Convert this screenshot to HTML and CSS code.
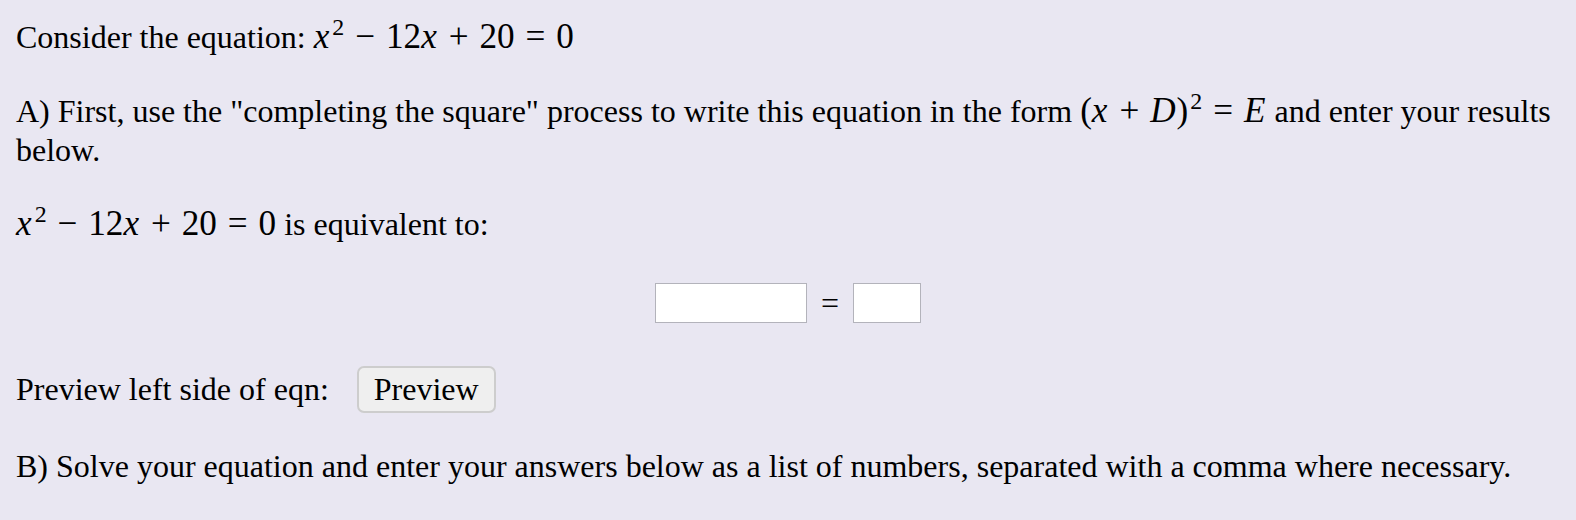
FILE: index.html
```html
<!DOCTYPE html>
<html lang="en">
<head>
  <meta charset="UTF-8" />
  <title>Completing the square</title>
  <link rel="stylesheet" href="styles.css">
</head>
<body>
  <div class="question">
    <p class="first">
      Consider the equation:
      <span class="math"><i>x</i><sup>2</sup><span class="op">−</span>12<i>x</i><span class="op">+</span>20<span class="op">=</span>0</span>
    </p>

    <p>
      A) First, use the "completing the square" process to write this equation in the form
      <span class="math">(<i>x</i><span class="op">+</span><i>D</i>)<sup>2</sup><span class="op">=</span><i>E</i></span>
      and enter your results below.
    </p>

    <p>
      <span class="math"><i>x</i><sup>2</sup><span class="op">−</span>12<i>x</i><span class="op">+</span>20<span class="op">=</span>0</span>
      is equivalent to:
    </p>

    <div class="answer-row">
      <input type="text" class="answer wide">
      <span class="math eq">=</span>
      <input type="text" class="answer narrow">
    </div>

    <div class="preview-row">
      <span>Preview left side of eqn:</span>
      <button type="button" class="preview-btn">Preview</button>
    </div>

    <p>
      B) Solve your equation and enter your answers below as a list of numbers, separated with a comma where necessary.
    </p>
  </div>
</body>
</html>
```

FILE: styles.css
```css
body {
  margin: 0;
  padding: 17px 16px;
  background: #e9e7f2;
  color: #000;
  font-family: "Liberation Serif", "Times New Roman", serif;
  font-size: 32px;
  line-height: 39px;
}

p {
  margin: 34px 0 0;
}

p.first {
  margin-top: 0;
}

.math {
  font-size: 1.1em;
  white-space: nowrap;
}

.math i {
  font-style: italic;
  padding-right: 1px;
}

.math sup {
  font-size: 0.68em;
  line-height: 0;
  vertical-align: 0.55em;
  margin-left: 2px;
}

.op {
  margin: 0 0.31em;
}

.answer-row {
  display: flex;
  justify-content: center;
  align-items: center;
  gap: 14px;
  margin-top: 39px;
}

.answer {
  box-sizing: border-box;
  height: 40px;
  margin: 0;
  padding: 0 6px;
  background: #fff;
  border: 1px solid #b3b3bb;
  border-radius: 0;
  font: inherit;
}

.wide {
  width: 152px;
}

.narrow {
  width: 68px;
}

.eq {
  font-size: 32px;
}

.preview-row {
  display: flex;
  align-items: center;
  gap: 28px;
  margin-top: 43px;
}

.preview-btn {
  box-sizing: border-box;
  height: 47px;
  padding: 0 15px;
  background: #efefef;
  border: 2px solid #cdcdcd;
  border-radius: 7px;
  color: #000;
  font-family: inherit;
  font-size: 32px;
}
```
